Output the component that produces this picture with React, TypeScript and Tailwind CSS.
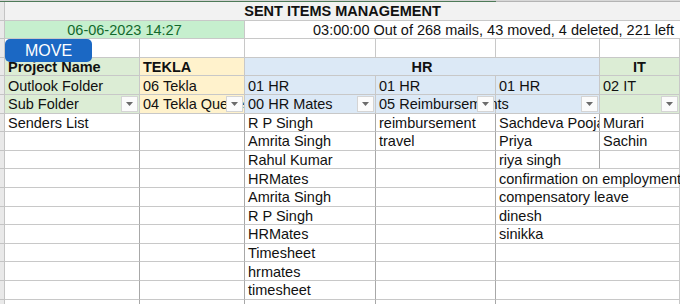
import React from "react";

const A = "w-[135px]";
const B = "w-[105px]";
const C = "w-[131px]";
const D = "w-[120px]";
const E = "w-[104px]";
const F = "w-[80px]";

const GREEN = "bg-[#dcedd5]";
const YELLOW = "bg-[#fff2cc]";
const BLUE = "bg-[#dce9f6]";

function Strip() {
  return <div className="w-[5px] shrink-0 h-full bg-[#e9e9e9] border-r border-b border-[#c4c4c4]" />;
}

function Row({ children, className = "" }: { children: React.ReactNode; className?: string }) {
  return <div className={"flex h-[18.6px] shrink-0 " + className}>{children}</div>;
}

function Cell({
  w,
  className = "",
  children,
  overflow = false,
  noRight = false,
}: {
  w: string;
  className?: string;
  children?: React.ReactNode;
  overflow?: boolean;
  noRight?: boolean;
}) {
  return (
    <div
      className={
        "relative shrink-0 h-full flex items-center px-[3px] whitespace-nowrap border-b border-[#c8c8c8] " +
        (noRight ? "" : "border-r ") +
        (overflow ? "overflow-visible " : "overflow-hidden ") +
        w +
        " " +
        className
      }
    >
      {children !== undefined && children !== "" ? (
        <span className="relative z-10 pt-[1px]">{children}</span>
      ) : null}
    </div>
  );
}

function Drop() {
  return (
    <span className="absolute right-[2px] top-[1px] w-[17px] h-[16px] bg-[#fbfbfb] border border-[#d4d4d4] flex items-center justify-center z-20">
      <svg width="7" height="4" viewBox="0 0 7 4">
        <path d="M0 0h7L3.5 4z" fill="#6b6b6b" />
      </svg>
    </span>
  );
}

const data: string[][] = [
  ["Senders List", "", "R P Singh", "reimbursement", "Sachdeva Pooja", "Murari"],
  ["", "", "Amrita Singh", "travel", "Priya", "Sachin"],
  ["", "", "Rahul Kumar", "", "riya singh", ""],
  ["", "", "HRMates", "", "confirmation on employment", ""],
  ["", "", "Amrita Singh", "", "compensatory leave", ""],
  ["", "", "R P Singh", "", "dinesh", ""],
  ["", "", "HRMates", "", "sinikka", ""],
  ["", "", "Timesheet", "", "", ""],
  ["", "", "hrmates", "", "", ""],
  ["", "", "timesheet", "", "", ""],
  ["", "", "", "", "", ""],
];

export default function App() {
  return (
    <div className="relative w-[680px] h-[304px] overflow-hidden bg-white text-[14.5px] leading-[16px] text-[#111] font-['Liberation_Sans',Arial,sans-serif]">
      {/* top edge */}
      <div className="flex h-[2px]">
        <div className="w-[496px] bg-[#d4d4d4] border-b border-[#4e7a58]" />
        <div className="flex-1 bg-[#d8d8d8] border-b border-[#b4b4b4]" />
      </div>

      {/* title */}
      <Row>
        <Strip />
        <Cell w="w-[675px]" className="bg-[#f2f2f2] justify-center font-bold" noRight>
          SENT ITEMS MANAGEMENT
        </Cell>
      </Row>

      {/* date & status */}
      <Row>
        <Strip />
        <Cell w="w-[240px]" className="bg-[#c6efce] justify-center text-[#12692c]">
          06-06-2023 14:27
        </Cell>
        <Cell w="w-[435px]" className="pl-[68px]" noRight>
          03:00:00 Out of 268 mails, 43 moved, 4 deleted, 221 left
        </Cell>
      </Row>

      {/* button row */}
      <Row>
        <Strip />
        <Cell w={A} />
        <Cell w={B} />
        <Cell w={C} />
        <Cell w={D} />
        <Cell w={E} />
        <Cell w={F} />
      </Row>

      {/* project name */}
      <Row>
        <Strip />
        <Cell w={A} className={GREEN + " font-bold"}>
          Project Name
        </Cell>
        <Cell w={B} className={YELLOW + " font-bold"}>
          TEKLA
        </Cell>
        <Cell w="w-[355px]" className={BLUE + " justify-center font-bold"}>
          HR
        </Cell>
        <Cell w={F} className={GREEN + " justify-center font-bold"}>
          IT
        </Cell>
      </Row>

      {/* outlook folder */}
      <Row>
        <Strip />
        <Cell w={A} className={GREEN}>
          Outlook Folder
        </Cell>
        <Cell w={B} className={YELLOW}>
          06 Tekla
        </Cell>
        <Cell w={C} className={BLUE}>
          01 HR
        </Cell>
        <Cell w={D} className={BLUE}>
          01 HR
        </Cell>
        <Cell w={E} className={BLUE}>
          01 HR
        </Cell>
        <Cell w={F} className={GREEN}>
          02 IT
        </Cell>
      </Row>

      {/* sub folder */}
      <Row>
        <Strip />
        <div className={"relative shrink-0 h-full " + A}>
          <Cell w="w-full" className={GREEN}>
            Sub Folder
          </Cell>
          <Drop />
        </div>
        <div className={"relative shrink-0 h-full " + B}>
          <Cell w="w-full" className={YELLOW}>
            04 Tekla Queries
          </Cell>
          <Drop />
        </div>
        <div className={"relative shrink-0 h-full " + C}>
          <Cell w="w-full" className={BLUE}>
            00 HR Mates
          </Cell>
          <Drop />
        </div>
        <div className={"relative shrink-0 h-full z-10 " + D}>
          <Cell w="w-full" className={BLUE} overflow>
            05 Reimbursements
          </Cell>
          <Drop />
        </div>
        <div className={"relative shrink-0 h-full " + E}>
          <Cell w="w-full" className={BLUE} />
          <Drop />
        </div>
        <div className={"relative shrink-0 h-full " + F}>
          <Cell w="w-full" className={GREEN} />
          <Drop />
        </div>
      </Row>

      {/* data rows */}
      {data.map((r, i) => (
        <Row key={i}>
          <Strip />
          <Cell w={A} className="border-r-[#a8a8a8]">{r[0]}</Cell>
          <Cell w={B} className="border-r-[#a8a8a8]">{r[1]}</Cell>
          <Cell w={C} className="border-r-[#a8a8a8]">{r[2]}</Cell>
          <Cell w={D} className="border-r-[#a8a8a8]">{r[3]}</Cell>
          <Cell w={E} className="border-r-[#a8a8a8]" overflow={i >= 3} noRight={i >= 3}>
            {r[4]}
          </Cell>
          <Cell w={F}>{r[5]}</Cell>
        </Row>
      ))}

      {/* MOVE button overlay */}
      <button className="absolute left-[5px] top-[39px] w-[87px] h-[23px] rounded-[5px] bg-[#1b68c4] text-white text-[16px] leading-none flex items-center justify-center z-30 font-['Liberation_Sans',Arial,sans-serif]">
        MOVE
      </button>
    </div>
  );
}
